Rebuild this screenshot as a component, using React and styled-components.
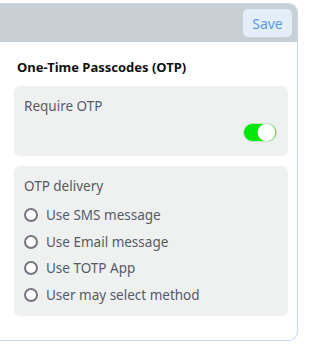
import styled, { createGlobalStyle } from "styled-components";

const Global = createGlobalStyle`
  html, body {
    margin: 0;
    padding: 0;
    background: #ffffff;
    font-family: "Noto Sans", "Open Sans", sans-serif;
  }
`;

const Page = styled.div`
  width: 320px;
  height: 352px;
  padding-top: 3px;
  box-sizing: border-box;
`;

const Card = styled.section`
  width: 298px;
  box-sizing: border-box;
  border: 1px solid #c6d7ee;
  border-left: none;
  border-radius: 0 9px 9px 0;
  overflow: hidden;
  background: #ffffff;
`;

const Header = styled.header`
  height: 38px;
  background: #c8d0d5;
  display: flex;
  justify-content: flex-end;
  align-items: flex-start;
  padding: 5px 5px 0 0;
  box-sizing: border-box;
`;

const SaveButton = styled.button`
  width: 49px;
  height: 28px;
  border: none;
  border-radius: 5px;
  background: #e4eef9;
  color: #5b9be3;
  font-family: inherit;
  font-size: 14px;
  padding: 0;
  cursor: pointer;
`;

const Body = styled.div`
  padding: 16px 9px 24px 14px;
  display: flex;
  flex-direction: column;
  gap: 10px;
`;

const Title = styled.h2`
  margin: 0 0 0 3px;
  font-size: 13px;
  line-height: 18px;
  font-weight: 700;
  color: #111111;
`;

const Panel = styled.div`
  background: #eff0f0;
  border-radius: 6px;
  padding: 10px 11px ${(p) => p.$bottom || 10}px 10px;
  display: flex;
  flex-direction: column;
`;

const Label = styled.div`
  font-size: 13.5px;
  line-height: 20px;
  color: #555b66;
`;

const ToggleRow = styled.div`
  display: flex;
  justify-content: flex-end;
  margin-top: 7px;
`;

const Toggle = styled.div`
  width: 34px;
  height: 19px;
  border-radius: 10px;
  background: #00e80a;
  border: 1px solid #bfe8bf;
  box-sizing: border-box;
  display: flex;
  justify-content: flex-end;
  align-items: center;
  padding: 0 1px;
`;

const Knob = styled.span`
  width: 17px;
  height: 17px;
  border-radius: 50%;
  background: #ffffff;
  box-shadow: 0 0 0 0.5px #d8dcd8;
`;

const Options = styled.div`
  display: flex;
  flex-direction: column;
  margin-top: 6px;
`;

const Option = styled.div`
  display: flex;
  align-items: center;
  gap: 8px;
  height: 26.5px;
  font-size: 13.5px;
  color: #555b66;
`;

const Radio = styled.span`
  display: block;
  width: 14px;
  height: 14px;
  min-width: 14px;
  border: 2px solid #76767f;
  border-radius: 50%;
  box-sizing: border-box;
  background: #ffffff;
`;

const options = [
  "Use SMS message",
  "Use Email message",
  "Use TOTP App",
  "User may select method",
];

export default function App() {
  return (
    <Page>
      <Global />
      <Card>
        <Header>
          <SaveButton>Save</SaveButton>
        </Header>
        <Body>
          <Title>One-Time Passcodes (OTP)</Title>
          <Panel $bottom={14}>
            <Label>Require OTP</Label>
            <ToggleRow>
              <Toggle>
                <Knob />
              </Toggle>
            </ToggleRow>
          </Panel>
          <Panel $bottom={8}>
            <Label>OTP delivery</Label>
            <Options>
              {options.map((o) => (
                <Option key={o}>
                  <Radio />
                  {o}
                </Option>
              ))}
            </Options>
          </Panel>
        </Body>
      </Card>
    </Page>
  );
}
